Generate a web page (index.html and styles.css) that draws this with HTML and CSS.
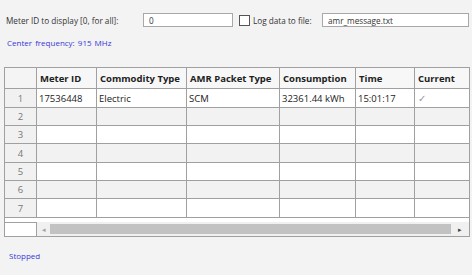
FILE: index.html
```html
<!DOCTYPE html>
<html lang="en">
<head>
    <meta charset="UTF-8">
    <title>AMR Meter Reader</title>
    <link rel="stylesheet" href="styles.css">
</head>
<body>
    <div class="window">
        <div class="toolbar">
            <label class="label meter-label" for="meterId">Meter ID to display [0, for all]:</label>
            <input class="field meter-field" id="meterId" type="text" value="0">
            <span class="check"></span>
            <label class="label log-label">Log data to file:</label>
            <input class="field log-field" type="text" value="amr_message.txt">
        </div>

        <div class="freq">Center frequency: 915 MHz</div>

        <div class="grid-box">
            <div class="grid">
                <div class="corner"></div>
                <div class="head">Meter ID</div>
                <div class="head">Commodity Type</div>
                <div class="head">AMR Packet Type</div>
                <div class="head">Consumption</div>
                <div class="head">Time</div>
                <div class="head">Current</div>

                <div class="num">1</div>
                <div class="cell">17536448</div>
                <div class="cell">Electric</div>
                <div class="cell">SCM</div>
                <div class="cell">32361.44 kWh</div>
                <div class="cell">15:01:17</div>
                <div class="cell tick">✓</div>

                <div class="num">2</div>
                <div class="cell alt"></div><div class="cell alt"></div><div class="cell alt"></div>
                <div class="cell alt"></div><div class="cell alt"></div><div class="cell alt"></div>

                <div class="num">3</div>
                <div class="cell"></div><div class="cell"></div><div class="cell"></div>
                <div class="cell"></div><div class="cell"></div><div class="cell"></div>

                <div class="num">4</div>
                <div class="cell alt"></div><div class="cell alt"></div><div class="cell alt"></div>
                <div class="cell alt"></div><div class="cell alt"></div><div class="cell alt"></div>

                <div class="num">5</div>
                <div class="cell"></div><div class="cell"></div><div class="cell"></div>
                <div class="cell"></div><div class="cell"></div><div class="cell"></div>

                <div class="num">6</div>
                <div class="cell alt"></div><div class="cell alt"></div><div class="cell alt"></div>
                <div class="cell alt"></div><div class="cell alt"></div><div class="cell alt"></div>

                <div class="num">7</div>
                <div class="cell"></div><div class="cell"></div><div class="cell"></div>
                <div class="cell"></div><div class="cell"></div><div class="cell"></div>
            </div>

            <div class="scroll-row">
                <div class="scroll-corner"></div>
                <div class="scrollbar">
                    <span class="arrow left">◂</span>
                    <div class="thumb"></div>
                    <span class="arrow right">▸</span>
                </div>
            </div>
        </div>

        <div class="status">Stopped</div>
    </div>
</body>
</html>
```

FILE: styles.css
```css
body {
    margin: 0;
    background: #ffffff;
    font-family: 'Open Sans', 'Noto Sans', sans-serif;
    color: #222;
}
.window {
    width: 472px;
    height: 275px;
    background: #f3f3f3;
    overflow: hidden;
}
.toolbar {
    display: flex;
    align-items: center;
    height: 14px;
    padding-top: 13px;
}
.label {
    font-size: 8.2px;
    color: #333;
    white-space: nowrap;
}
.meter-label {
    margin-left: 6px;
    width: 137px;
}
.field {
    box-sizing: border-box;
    height: 14px;
    border: 1px solid #a8a8a8;
    background: #fff;
    font-family: inherit;
    font-size: 8.2px;
    color: #333;
    padding: 0 5px;
    margin: 0;
    outline: none;
}
.meter-field {
    width: 90px;
}
.check {
    box-sizing: border-box;
    width: 11px;
    height: 11px;
    border: 1px solid #555;
    background: #fff;
    margin-left: 6px;
}
.log-label {
    margin-left: 3px;
    width: 69px;
}
.log-field {
    width: 147px;
}
.freq {
    font-size: 8px;
    color: #3737d8;
    margin: 10px 0 0 7px;
    height: 12px;
    line-height: 12px;
    word-spacing: 1px;
}
.grid-box {
    margin: 18px 0 0 4px;
    width: 464px;
    border: 1px solid #a0a0a0;
    background: #fff;
}
.grid {
    display: grid;
    grid-template-columns: 31px 59px 89px 92px 75px 58px 54px;
    grid-template-rows: 20px 18px 17px 17px 18px 17px 17px 18px;
    gap: 1px;
    padding-bottom: 1px;
    background: #a0a0a0;
}
.corner, .head, .num, .cell {
    display: flex;
    align-items: center;
    font-size: 9.5px;
    white-space: nowrap;
    overflow: hidden;
}
.corner {
    background: #f4f4f4;
}
.head {
    background: #f7f7f7;
    font-weight: bold;
    padding-left: 3px;
    color: #222;
}
.num {
    background: #f1f1f1;
    justify-content: center;
    color: #777;
}
.cell {
    background: #fff;
    padding-left: 2px;
}
.cell.alt {
    background: #f2f2f2;
}
.tick {
    color: #999;
    padding-left: 3px;
}
.scroll-row {
    display: flex;
    margin-top: 4px;
    height: 14px;
}
.scroll-corner {
    width: 31px;
    border-top: 1px solid #a0a0a0;
    border-right: 1px solid #a0a0a0;
}
.scrollbar {
    flex: 1;
    display: flex;
    align-items: center;
    background: #f0f0f0;
}
.arrow {
    font-size: 7px;
    width: 13px;
    text-align: center;
    color: #a0a0a0;
}
.arrow.right {
    color: #444;
    width: 18px;
}
.thumb {
    flex: 1;
    height: 10px;
    background: #c2c2c2;
}
.status {
    font-size: 8px;
    color: #3737d8;
    margin: 13px 0 0 9px;
}
```
